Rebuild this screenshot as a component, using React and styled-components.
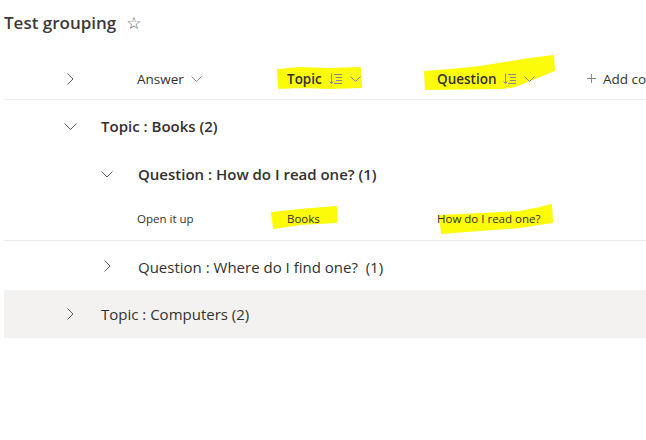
import React from "react";
import styled, { createGlobalStyle } from "styled-components";

const Global = createGlobalStyle`
  html, body { margin: 0; padding: 0; background: #fff; overflow: hidden; }
  body { font-family: "Open Sans", "Noto Sans", sans-serif; color: #323130; }
  * { box-sizing: border-box; }
`;

const Page = styled.div`
  width: 646px;
  height: 440px;
  overflow: hidden;
`;

const TitleBar = styled.div`
  height: 58px;
  padding: 10px 0 0 4px;
  display: flex;
  align-items: flex-start;
  gap: 10px;
`;

const Title = styled.h1`
  margin: 0;
  font-size: 17px;
  font-weight: 600;
  line-height: 26px;
  color: #3b3a39;
`;

const Star = styled.span`
  font-size: 17px;
  line-height: 26px;
  color: #605e5c;
  font-family: "DejaVu Sans", sans-serif;
`;

const List = styled.div`
  margin-left: 4px;
`;

const HeaderRow = styled.div`
  display: grid;
  grid-template-columns: 48px 36px 49px 150px 150px 150px 1fr;
  height: 42px;
  align-items: center;
  border-bottom: 1px solid #edebe9;
`;

const IconCell = styled.div`
  display: flex;
  justify-content: center;
  align-items: center;
  color: #605e5c;
`;

const HeaderCell = styled.div`
  position: relative;
  display: flex;
  align-items: center;
  gap: 7px;
  height: 20px;
  white-space: nowrap;
  font-size: 13.5px;
  font-weight: ${(p) => (p.$strong ? 600 : 400)};
  color: #323130;
`;

const Label = styled.span`
  position: relative;
  z-index: 1;
`;

const SmallIcon = styled.span`
  position: relative;
  z-index: 1;
  display: inline-flex;
  color: #8a8886;
`;

const AddLabel = styled.span`
  color: #323130;
  font-size: 13.5px;
`;

const Body = styled.div`
  padding-top: 2px;
`;

const GroupRow = styled.div`
  display: flex;
  align-items: center;
  height: ${(p) => p.$h || 48}px;
  padding-left: ${(p) => 48 + p.$level * 37}px;
  background: ${(p) => (p.$shaded ? "#f3f2f1" : "transparent")};
`;

const GroupChevron = styled.div`
  width: 36px;
  display: flex;
  justify-content: center;
  align-items: center;
  color: #605e5c;
`;

const GroupText = styled.span`
  margin-left: 13px;
  font-size: 15px;
  font-weight: ${(p) => (p.$strong ? 600 : 400)};
  color: #323130;
  white-space: pre;
  padding-top: ${(p) => p.$drop || 0}px;
`;

const ItemRow = styled.div`
  display: grid;
  grid-template-columns: 133px 150px 150px 1fr;
  height: 43px;
  align-items: center;
  border-bottom: 1px solid #edebe9;
`;

const ItemCell = styled.div`
  position: relative;
  height: 16px;
  line-height: 16px;
  font-size: 11.5px;
  color: #323130;
  white-space: nowrap;
`;

const MarkerSvg = styled.svg`
  position: absolute;
  left: 0;
  top: ${(p) => p.$top}px;
  width: 1px;
  height: 1px;
  overflow: visible;
  z-index: 0;
  pointer-events: none;
`;

const Marker = ({ points, top }) => (
  <MarkerSvg $top={top} viewBox="0 0 1 1">
    <polygon
      points={points}
      fill="#fbfb0a"
      stroke="#fbfb0a"
      strokeWidth="2"
      strokeLinejoin="round"
    />
  </MarkerSvg>
);

const ChevronRight = ({ h = 11 }) => (
  <svg width={h / 2 + 1} height={h + 1} viewBox={`0 0 ${h / 2 + 1} ${h + 1}`}>
    <path
      d={`M0.5 0.5 L${h / 2 + 0.5} ${h / 2 + 0.5} L0.5 ${h + 0.5}`}
      fill="none"
      stroke="currentColor"
      strokeWidth="1"
    />
  </svg>
);

const ChevronDown = ({ w = 12 }) => (
  <svg width={w + 1} height={w / 2 + 1} viewBox={`0 0 ${w + 1} ${w / 2 + 1}`}>
    <path
      d={`M0.5 0.5 L${w / 2 + 0.5} ${w / 2 + 0.5} L${w + 0.5} 0.5`}
      fill="none"
      stroke="currentColor"
      strokeWidth="1"
    />
  </svg>
);

const SortIcon = () => (
  <svg width="14" height="12" viewBox="0 0 14 12">
    <g fill="none" stroke="currentColor" strokeWidth="1">
      <path d="M2.5 0.5 V10.5 M0.5 8.5 L2.5 10.5 L4.5 8.5" />
      <path d="M5 1.5 H13 M7 4.5 H13 M7 7.5 H13 M5 10.5 H13" />
    </g>
  </svg>
);

const PlusIcon = () => (
  <svg width="9" height="9" viewBox="0 0 9 9">
    <path d="M4.5 0 V9 M0 4.5 H9" stroke="#8a8886" strokeWidth="1" />
  </svg>
);

const TOPIC_HEAD = "-9,-9 13,-11 43,-10 73,-11 74,8 43,9 13,8 -8,9";
const QUESTION_HEAD = "-12,-7 13,-9 43,-12 68,-16 93,-20 116,-23 117,-9 103,-3 93,1 78,7 66,9 -11,10";
const BOOKS = "-15,-6 13,-9 49,-12 49,3 13,5 -13,9";
const HOWDO = "3,-3 43,-5 83,-7 103,-11 114,-14 115,3 83,8 43,11 5,14";

export default function App() {
  return (
    <Page>
      <Global />
      <TitleBar>
        <Title>Test grouping</Title>
        <Star>☆</Star>
      </TitleBar>
      <List>
        <HeaderRow>
          <div />
          <IconCell>
            <ChevronRight h={11} />
          </IconCell>
          <div />
          <HeaderCell>
            <Label>Answer</Label>
            <SmallIcon>
              <ChevronDown w={10} />
            </SmallIcon>
          </HeaderCell>
          <HeaderCell $strong>
            <Marker points={TOPIC_HEAD} top={10} />
            <Label>Topic</Label>
            <SmallIcon>
              <SortIcon />
            </SmallIcon>
            <SmallIcon>
              <ChevronDown w={10} />
            </SmallIcon>
          </HeaderCell>
          <HeaderCell $strong>
            <Marker points={QUESTION_HEAD} top={10} />
            <Label>Question</Label>
            <SmallIcon>
              <SortIcon />
            </SmallIcon>
            <SmallIcon>
              <ChevronDown w={10} />
            </SmallIcon>
          </HeaderCell>
          <HeaderCell>
            <PlusIcon />
            <AddLabel>Add column</AddLabel>
          </HeaderCell>
        </HeaderRow>
        <Body>
          <GroupRow $level={0}>
            <GroupChevron>
              <ChevronDown w={12} />
            </GroupChevron>
            <GroupText $strong>Topic : Books (2)</GroupText>
          </GroupRow>
          <GroupRow $level={1}>
            <GroupChevron>
              <ChevronDown w={11} />
            </GroupChevron>
            <GroupText $strong>Question : How do I read one? (1)</GroupText>
          </GroupRow>
          <ItemRow>
            <div />
            <ItemCell>Open it up</ItemCell>
            <ItemCell>
              <Marker points={BOOKS} top={8} />
              <Label>Books</Label>
            </ItemCell>
            <ItemCell>
              <Marker points={HOWDO} top={8} />
              <Label>How do I read one?</Label>
            </ItemCell>
          </ItemRow>
          <GroupRow $level={1} $h={49}>
            <GroupChevron>
              <ChevronRight h={11} />
            </GroupChevron>
            <GroupText $drop={3}>{"Question : Where do I find one?  (1)"}</GroupText>
          </GroupRow>
          <GroupRow $level={0} $shaded>
            <GroupChevron>
              <ChevronRight h={11} />
            </GroupChevron>
            <GroupText>Topic : Computers (2)</GroupText>
          </GroupRow>
        </Body>
      </List>
    </Page>
  );
}
